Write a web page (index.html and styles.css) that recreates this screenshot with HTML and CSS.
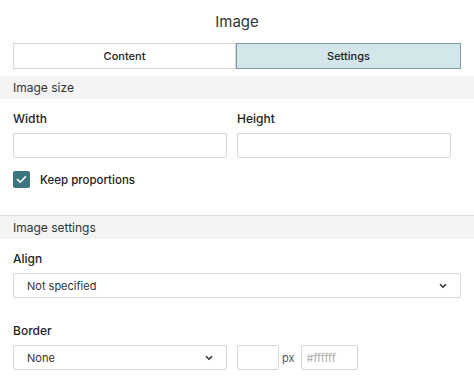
FILE: index.html
```html
<!DOCTYPE html>
<html lang="en">
<head>
    <meta charset="UTF-8">
    <title>Image</title>
    <link rel="stylesheet" href="styles.css">
</head>
<body>
    <h1 class="title">Image</h1>

    <div class="tabs">
        <button class="tab">Content</button>
        <button class="tab active">Settings</button>
    </div>

    <!-- Image size -->
    <div class="section-head first">Image size</div>
    <div class="section">
        <div class="row two">
            <div class="field">
                <label class="label">Width</label>
                <input class="input" type="text">
            </div>
            <div class="field">
                <label class="label">Height</label>
                <input class="input" type="text">
            </div>
        </div>
        <label class="check">
            <span class="box">
                <svg width="11" height="9" viewBox="0 0 11 9"><path d="M1.5 4.6 L4.2 7.2 L9.5 1.8" fill="none" stroke="#fff" stroke-width="1.6" stroke-linecap="round" stroke-linejoin="round"/></svg>
            </span>
            Keep proportions
        </label>
    </div>

    <!-- Image settings -->
    <div class="section-head">Image settings</div>
    <div class="section">
        <div class="field">
            <label class="label">Align</label>
            <div class="select">
                <span>Not specified</span>
                <svg class="chev" width="8" height="6" viewBox="0 0 8 6"><path d="M1 1.2 L4 4.2 L7 1.2" fill="none" stroke="#333" stroke-width="1.6"/></svg>
            </div>
        </div>
        <div class="field border-field">
            <label class="label">Border</label>
            <div class="border-row">
                <div class="select half">
                    <span>None</span>
                    <svg class="chev" width="8" height="6" viewBox="0 0 8 6"><path d="M1 1.2 L4 4.2 L7 1.2" fill="none" stroke="#333" stroke-width="1.6"/></svg>
                </div>
                <input class="input px" type="text">
                <span class="unit">px</span>
                <input class="input color" type="text" placeholder="#ffffff">
            </div>
        </div>
    </div>
</body>
</html>
```

FILE: styles.css
```css
/* General */
body {
    margin: 0;
    font-family: 'Inter', 'Liberation Sans', sans-serif;
    color: #222;
    background: #fff;
    width: 474px;
}

.title {
    margin: 0;
    padding-top: 12px;
    height: 31px;
    text-align: center;
    font-size: 15px;
    font-weight: 400;
    line-height: 19px;
    color: #333;
}

.tabs {
    display: grid;
    grid-template-columns: 223px 225px;
    margin: 0 13px;
    height: 26px;
}

.tab {
    font-family: inherit;
    font-size: 11px;
    font-weight: 500;
    color: #222;
    background: #fff;
    border: 1px solid #d4d4d4;
    padding: 0;
    margin: 0;
}

.tab.active {
    background: #d3e7eb;
    border-color: #7f9ea3;
}

.section-head {
    background: #f4f4f4;
    height: 23px;
    line-height: 23px;
    padding-left: 13px;
    font-size: 12px;
    color: #333;
    border-top: 1px solid #dedede;
}

.section-head.first {
    margin-top: 7px;
    border-top: none;
}

.section {
    padding: 0 13px;
}

.row.two {
    display: grid;
    grid-template-columns: 214px 214px;
    gap: 10px;
}

.field {
    display: flex;
    flex-direction: column;
}

.label {
    font-size: 12px;
    font-weight: 500;
    color: #222;
    margin-top: 13px;
    height: 21px;
    line-height: 14px;
}

.input {
    box-sizing: border-box;
    height: 25px;
    border: 1px solid #d6d6d6;
    border-radius: 2px;
    font-family: inherit;
    font-size: 11px;
    padding: 0 6px;
    outline: none;
}

.input::placeholder {
    color: #aaa;
}

.check {
    display: flex;
    align-items: center;
    gap: 10px;
    margin-top: 13px;
    font-size: 11.5px;
    font-weight: 500;
    color: #222;
    height: 17px;
    margin-bottom: 27px;
}

.box {
    width: 17px;
    height: 17px;
    background: #3a7580;
    border-radius: 2px;
    display: flex;
    align-items: center;
    justify-content: center;
}

.select {
    box-sizing: border-box;
    height: 25px;
    border: 1px solid #d6d6d6;
    border-radius: 2px;
    display: flex;
    align-items: center;
    justify-content: space-between;
    padding: 0 13px;
    font-size: 11px;
    color: #333;
}

.border-field {
    margin-top: 13px;
}

.border-row {
    display: flex;
    align-items: center;
}

.select.half {
    width: 214px;
}

.input.px {
    width: 42px;
    margin-left: 10px;
}

.unit {
    font-size: 11px;
    color: #555;
    margin: 0 6px 0 3px;
}

.input.color {
    width: 57px;
    padding: 0 5px;
}
```
